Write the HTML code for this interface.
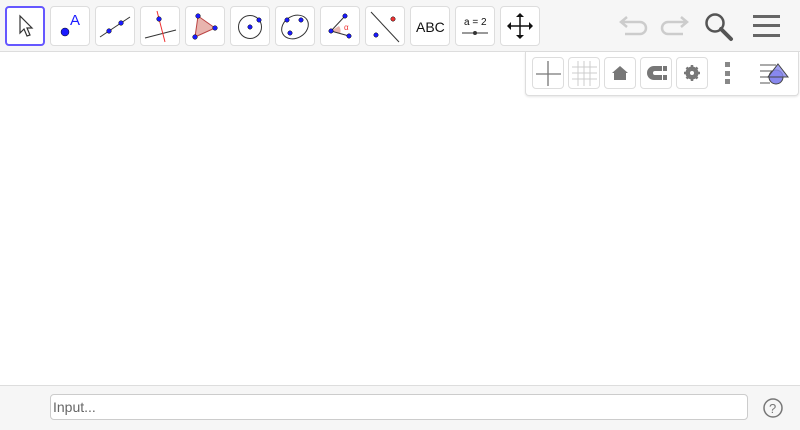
<!DOCTYPE html>
<html><head><style>
*{margin:0;padding:0;box-sizing:border-box}
body{width:800px;height:430px;overflow:hidden;background:#fff;font-family:"Liberation Sans",sans-serif;position:relative}
.tb{position:absolute;left:0;top:0;width:800px;height:52px;background:#f6f6f6;border-bottom:1px solid #ddd}
.b{position:absolute;top:6px;width:40px;height:40px;background:#fff;border:1px solid #ddd;border-radius:4px}
.b svg{position:absolute;left:0;top:0}
.sp{position:absolute;left:525px;top:52px;width:274px;height:44px;background:#fff;border:1px solid #ddd;border-top:none;border-radius:0 0 4px 4px;box-shadow:0 1px 2px rgba(0,0,0,.1)}
.s{position:absolute;top:5px;width:32px;height:32px;border:1px solid #ddd;border-radius:4px;background:#fff}
.s svg{position:absolute;left:0;top:0}
.bot{position:absolute;left:0;top:385px;width:800px;height:45px;background:#f6f6f6;border-top:1px solid #ddd}
.in{position:absolute;left:50px;top:8px;width:698px;height:26px;background:#fff;border:1px solid #ccc;border-radius:4px;font-size:14px;color:#666;padding:4px 2px}
</style></head><body>
<div class="tb">
<div class="b" style="left:5px;border:2px solid #6557ff"><svg width="36" height="36"><path d="M13 8 L13 25 L17 21 L20 28 L23 27 L20 20 L25 20 Z" fill="#fff" stroke="#333" stroke-width="1.2"/></svg></div>
<div class="b" style="left:50px"><svg width="38" height="38"><circle cx="14" cy="25" r="4" fill="#1a1aff" stroke="#000" stroke-width=".5"/><text x="19" y="18" font-size="15" fill="#1a1aff" font-family="Liberation Sans">A</text></svg></div>
<div class="b" style="left:95px"><svg width="38" height="38"><line x1="4" y1="30" x2="34" y2="10" stroke="#333"/><circle cx="13" cy="24" r="2.3" fill="#1a1aff" stroke="#000" stroke-width=".5"/><circle cx="25" cy="16" r="2.3" fill="#1a1aff" stroke="#000" stroke-width=".5"/></svg></div>
<div class="b" style="left:140px"><svg width="38" height="38"><line x1="4" y1="31" x2="35" y2="23" stroke="#333"/><line x1="16" y1="4" x2="24" y2="35" stroke="#e33"/><circle cx="18" cy="12" r="2.3" fill="#1a1aff" stroke="#000" stroke-width=".5"/></svg></div>
<div class="b" style="left:185px"><svg width="38" height="38"><path d="M12 9 L29 21 L9 30 Z" fill="#e8b4ae" stroke="#b44" stroke-width="1"/><circle cx="12" cy="9" r="2.3" fill="#1a1aff" stroke="#000" stroke-width=".5"/><circle cx="29" cy="21" r="2.3" fill="#1a1aff" stroke="#000" stroke-width=".5"/><circle cx="9" cy="30" r="2.3" fill="#1a1aff" stroke="#000" stroke-width=".5"/></svg></div>
<div class="b" style="left:230px"><svg width="38" height="38"><circle cx="19" cy="20" r="11.5" fill="none" stroke="#333"/><circle cx="19" cy="20" r="2.2" fill="#1a1aff" stroke="#000" stroke-width=".5"/><circle cx="28" cy="13" r="2.2" fill="#1a1aff" stroke="#000" stroke-width=".5"/></svg></div>
<div class="b" style="left:275px"><svg width="38" height="38"><ellipse cx="19" cy="20" rx="14" ry="11" transform="rotate(-30 19 20)" fill="none" stroke="#333"/><circle cx="11" cy="13" r="2.2" fill="#1a1aff" stroke="#000" stroke-width=".5"/><circle cx="25" cy="13" r="2.2" fill="#1a1aff" stroke="#000" stroke-width=".5"/><circle cx="14" cy="26" r="2.2" fill="#1a1aff" stroke="#000" stroke-width=".5"/></svg></div>
<div class="b" style="left:320px"><svg width="38" height="38"><path d="M10 24 L18 19 A9 9 0 0 1 19 27 Z" fill="#e8b4ae"/><line x1="10" y1="24" x2="24" y2="9" stroke="#333"/><line x1="10" y1="24" x2="28" y2="29" stroke="#333"/><circle cx="10" cy="24" r="2.2" fill="#1a1aff" stroke="#000" stroke-width=".5"/><circle cx="24" cy="9" r="2.2" fill="#1a1aff" stroke="#000" stroke-width=".5"/><circle cx="28" cy="29" r="2.2" fill="#1a1aff" stroke="#000" stroke-width=".5"/><text x="23" y="23" font-size="8" fill="#e33">α</text></svg></div>
<div class="b" style="left:365px"><svg width="38" height="38"><line x1="5" y1="5" x2="33" y2="35" stroke="#333"/><circle cx="27" cy="12" r="2.2" fill="#e33" stroke="#000" stroke-width=".5"/><circle cx="10" cy="28" r="2.2" fill="#1a1aff" stroke="#000" stroke-width=".5"/></svg></div>
<div class="b" style="left:410px"><svg width="38" height="38"><text x="5" y="25" font-size="14" fill="#111" font-family="Liberation Sans">ABC</text></svg></div>
<div class="b" style="left:455px"><svg width="38" height="38"><text x="8" y="18" font-size="10" fill="#111" font-family="Liberation Sans">a = 2</text><line x1="6" y1="26" x2="32" y2="26" stroke="#333"/><circle cx="19" cy="26" r="2" fill="#333"/></svg></div>
<div class="b" style="left:500px"><svg width="38" height="38"><path d="M19 8V30M8 19H30" stroke="#111" stroke-width="1.5"/><path d="M19 6l-4 4h8zM19 32l-4-4h8zM6 19l4-4v8zM32 19l-4-4v8z" fill="#111"/></svg></div>
<svg style="position:absolute;left:615px;top:10px" width="80" height="32"><path d="M12 7 L6 12 L12 17 M6 12 H25 A6 6 0 0 1 25 24 H10" fill="none" stroke="#ccc" stroke-width="2.5"/><path d="M66 7 L72 12 L66 17 M72 12 H53 A6 6 0 0 0 53 24 H68" fill="none" stroke="#ccc" stroke-width="2.5"/></svg>
<svg style="position:absolute;left:700px;top:8px" width="40" height="36"><circle cx="15" cy="15" r="8.5" fill="none" stroke="#555" stroke-width="2.5"/><line x1="21" y1="21" x2="31" y2="31" stroke="#555" stroke-width="4" stroke-linecap="round"/></svg>
<div style="position:absolute;left:753px;top:15px;width:27px;height:3px;background:#666"></div>
<div style="position:absolute;left:753px;top:24px;width:27px;height:3px;background:#666"></div>
<div style="position:absolute;left:753px;top:34px;width:27px;height:3px;background:#666"></div>
</div>
<div class="sp">
<div class="s" style="left:6px"><svg width="30" height="30"><path d="M15 3V28M3 16H28" stroke="#777" stroke-width="1.3"/></svg></div>
<div class="s" style="left:42px"><svg width="30" height="30" stroke="#ccc"><path d="M9 3V28M15 3V28M21 3V28M3 9H28M3 15H28M3 21H28"/></svg></div>
<div class="s" style="left:78px"><svg width="30" height="30"><path d="M15 8 L23 15 H21 V22 H9 V15 H7 Z" fill="#777"/></svg></div>
<div class="s" style="left:114px"><svg width="30" height="30"><path d="M21 8 H13 A7 7 0 0 0 13 22 H21 V17 H14 A2 2 0 0 1 14 13 H21 Z" fill="#777"/><rect x="22" y="8" width="4" height="5" fill="#777"/><rect x="22" y="17" width="4" height="5" fill="#777"/></svg></div>
<div class="s" style="left:150px"><svg width="30" height="30"><circle cx="15" cy="15" r="5" fill="none" stroke="#777" stroke-width="3"/><path d="M15 7V23M7 15H23M9.5 9.5L20.5 20.5M20.5 9.5L9.5 20.5" stroke="#777" stroke-width="2.5"/><circle cx="15" cy="15" r="2" fill="#fff"/></svg></div>
<div style="position:absolute;left:199px;top:10px;width:5px;height:5px;background:#888"></div>
<div style="position:absolute;left:199px;top:19px;width:5px;height:5px;background:#888"></div>
<div style="position:absolute;left:199px;top:27px;width:5px;height:5px;background:#888"></div>
<svg style="position:absolute;left:232px;top:8px" width="36" height="28"><path d="M2 5H18M2 11H14M2 17H12M2 23H12" stroke="#777" stroke-width="1.3"/><circle cx="18" cy="17" r="7" fill="#8888ee" stroke="#444"/><path d="M20 4 L30 17 H10 Z" fill="#8888ee" fill-opacity=".8" stroke="#444"/></svg>
</div>
<div class="bot"><div class="in">Input...</div>
<svg style="position:absolute;left:762px;top:11px" width="22" height="22"><circle cx="11" cy="11" r="9" fill="none" stroke="#777" stroke-width="1.5"/><text x="7" y="16" font-size="13" fill="#777" font-family="Liberation Sans">?</text></svg></div>
</body></html>
